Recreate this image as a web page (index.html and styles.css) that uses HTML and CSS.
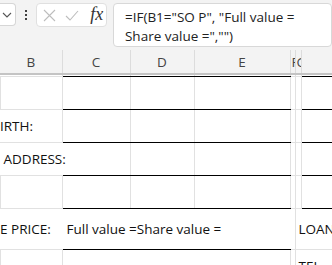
FILE: index.html
```html
<!DOCTYPE html>
<html lang="en">
<head>
    <meta charset="UTF-8">
    <title>Formula bar</title>
    <link rel="stylesheet" href="styles.css">
</head>
<body>
    <div class="toolbar">
        <div class="name-box">
            <svg width="10" height="6" viewBox="0 0 10 6"><path d="M1 1 L5 5 L9 1" fill="none" stroke="#555" stroke-width="1.1"/></svg>
        </div>
        <div class="dots"><span></span><span></span><span></span></div>
        <div class="fx-buttons">
            <svg class="btn-x" width="13" height="13" viewBox="0 0 13 13"><path d="M1 1 L12 12 M12 1 L1 12" stroke="#bdbdbd" stroke-width="1.1"/></svg>
            <svg class="btn-ok" width="14" height="11" viewBox="0 0 14 11"><path d="M1 6 L5 10 L13 1" fill="none" stroke="#bdbdbd" stroke-width="1.1"/></svg>
            <span class="fx">fx</span>
        </div>
        <div class="formula">=IF(B1="SO P", "Full value =<br>Share value =","")</div>
    </div>

    <table class="sheet">
        <colgroup>
            <col class="col-b"><col class="col-c"><col class="col-d"><col class="col-e">
            <col class="col-f"><col class="col-g"><col class="col-h">
        </colgroup>
        <thead>
            <tr>
                <th>B</th><th>C</th><th>D</th><th>E</th><th class="clip">F</th><th class="clip">G</th><th></th>
            </tr>
        </thead>
        <tbody>
            <tr class="edge">
                <td></td><td class="bb"></td><td class="bb"></td><td class="bb"></td><td></td><td></td><td class="bb"></td>
            </tr>
            <tr>
                <td class="left"></td><td class="bb"></td><td class="bb"></td><td class="bb"></td><td></td><td></td><td class="bb"></td>
            </tr>
            <tr>
                <td class="over">IRTH:</td><td class="bb"></td><td class="bb"></td><td class="bb"></td><td></td><td></td><td class="bb"></td>
            </tr>
            <tr>
                <td class="over open">&nbsp;ADDRESS:</td><td class="bb"></td><td class="bb"></td><td class="bb"></td><td></td><td></td><td class="bb"></td>
            </tr>
            <tr>
                <td class="left"></td><td class="bb"></td><td class="bb"></td><td class="bb"></td><td></td><td></td><td class="bb"></td>
            </tr>
            <tr class="tall">
                <td class="over open">E PRICE:</td>
                <td class="bb open" colspan="3"><span class="spill">Full value =Share value =</span></td>
                <td></td><td class="open">LOAN</td><td></td>
            </tr>
            <tr>
                <td class="left"></td><td colspan="3"></td><td></td><td class="open">TEL</td><td></td>
            </tr>
        </tbody>
    </table>
</body>
</html>
```

FILE: styles.css
```css
body {
    margin: 0;
    width: 332px;
    height: 265px;
    overflow: hidden;
    background-color: #f3f3f3;
    font-family: "Open Sans", "Noto Sans", sans-serif;
}

/* Formula bar */
.toolbar {
    display: flex;
    align-items: flex-start;
    height: 50px;
    padding-top: 3px;
    box-sizing: border-box;
}

.name-box {
    width: 17px;
    height: 23px;
    background-color: #fff;
    border: 1px solid #d6d6d6;
    border-left: none;
    border-radius: 0 4px 4px 0;
    display: flex;
    align-items: center;
    justify-content: flex-end;
    padding-right: 3px;
    box-sizing: border-box;
}

.dots {
    width: 21px;
    height: 23px;
    display: flex;
    flex-direction: column;
    align-items: center;
    justify-content: center;
    gap: 2px;
}

.dots span {
    width: 2px;
    height: 2px;
    background-color: #404040;
}

.fx-buttons {
    width: 74px;
    height: 24px;
    background-color: #fff;
    border: 1px solid #e0e0e0;
    border-radius: 4px;
    display: flex;
    align-items: center;
    box-sizing: border-box;
    padding-left: 6px;
}

.btn-ok {
    margin-left: 9px;
}

.fx {
    font-family: "Liberation Serif", serif;
    font-style: italic;
    font-size: 18px;
    color: #333;
    margin-left: 11px;
    margin-top: -2px;
}

.formula {
    margin-left: 6px;
    width: 230px;
    height: 44px;
    background-color: #fff;
    border: 1px solid #d8d8d8;
    border-radius: 4px;
    box-sizing: border-box;
    padding: 4px 0 0 11px;
    font-size: 13.5px;
    line-height: 19px;
    color: #222;
    white-space: nowrap;
}

/* Grid */
.sheet {
    border-collapse: collapse;
    table-layout: fixed;
    width: 360px;
    font-family: "Open Sans", "Noto Sans", sans-serif;
    font-size: 13.5px;
    color: #111;
}

.col-b { width: 62px; }
.col-c { width: 68px; }
.col-d { width: 64px; }
.col-e { width: 96px; }
.col-f { width: 5px; }
.col-g { width: 6px; }
.col-h { width: 59px; }

.sheet th {
    height: 23px;
    padding: 0;
    font-weight: normal;
    color: #444;
    border-right: 1px solid #dcdcdc;
    border-bottom: 2px solid #c4c4c4;
    overflow: hidden;
    white-space: nowrap;
}

.sheet th.clip {
    text-align: left;
    padding-left: 1px;
}

.sheet td {
    height: 32px;
    padding: 0 0 0 3px;
    background-color: #fff;
    border-right: 1px solid #e1e1e1;
    border-bottom: 1px solid #e1e1e1;
    white-space: nowrap;
}

.sheet tr.edge td {
    height: 1px;
}

.sheet tr.tall td {
    height: 40px;
}

.sheet td.bb {
    border-bottom: 1px solid #000;
}

.sheet td.over {
    padding-left: 0;
}

.sheet td.open {
    border-right-color: #fff;
    overflow: visible;
}

.sheet td.left {
    box-shadow: inset 1px 0 0 #e1e1e1;
}

.spill {
    display: block;
    width: 0;
    padding-left: 1px;
    overflow: visible;
}
```
